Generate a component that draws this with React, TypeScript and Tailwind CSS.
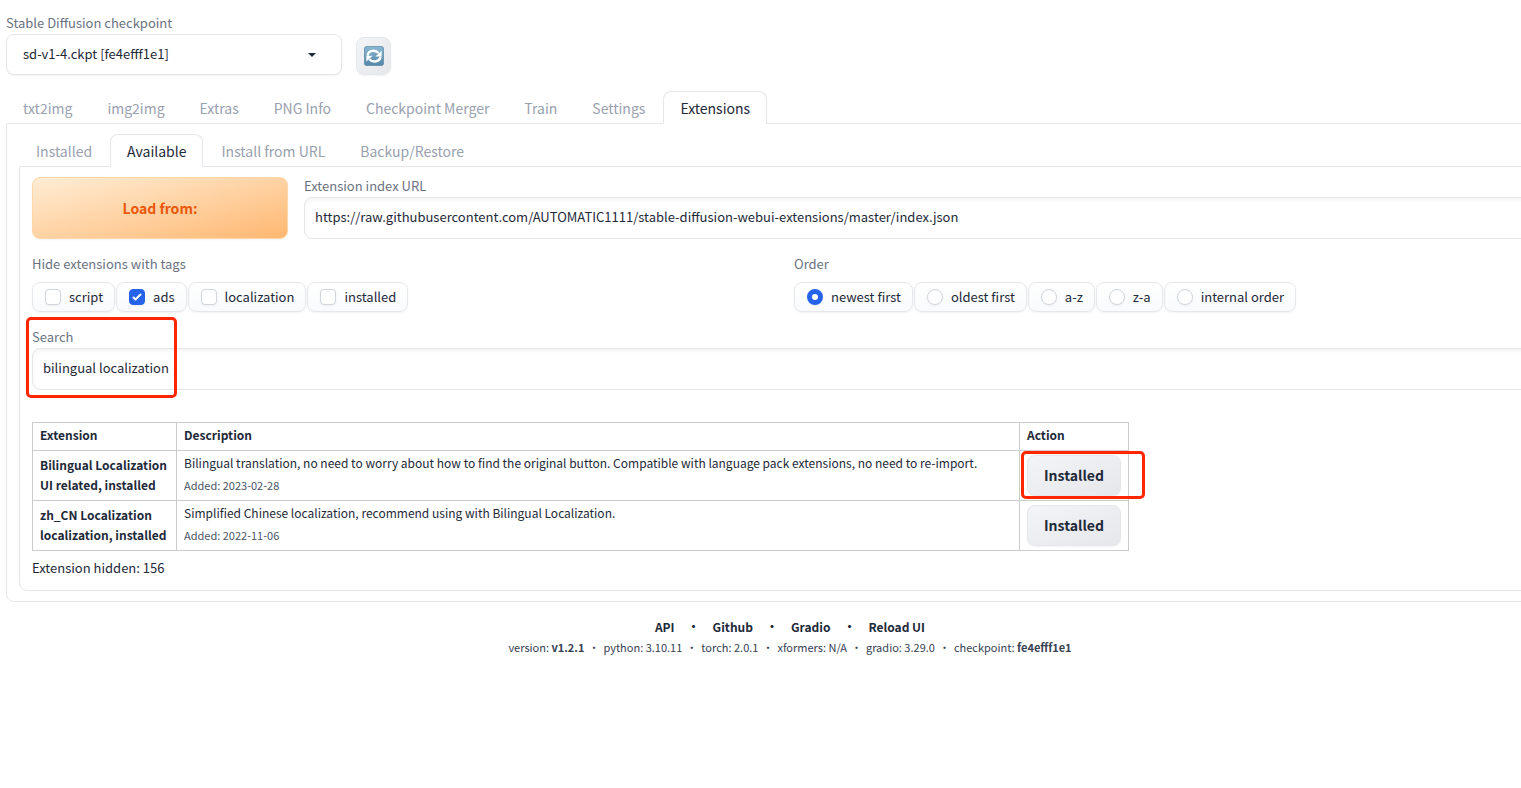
import { useState } from "react";
import clsx from "clsx";

const mainTabs = [
  "txt2img",
  "img2img",
  "Extras",
  "PNG Info",
  "Checkpoint Merger",
  "Train",
  "Settings",
  "Extensions",
];

const extensionTabs = [
  "Installed",
  "Available",
  "Install from URL",
  "Backup/Restore",
];

const tagOptions = ["script", "ads", "localization", "installed"];

const orderOptions = [
  "newest first",
  "oldest first",
  "a-z",
  "z-a",
  "internal order",
];

const extensions = [
  {
    name: "Bilingual Localization",
    tags: "UI related, installed",
    description:
      "Bilingual translation, no need to worry about how to find the original button. Compatible with language pack extensions, no need to re-import.",
    added: "2023-02-28",
    marked: true,
  },
  {
    name: "zh_CN Localization",
    tags: "localization, installed",
    description:
      "Simplified Chinese localization, recommend using with Bilingual Localization.",
    added: "2022-11-06",
    marked: false,
  },
];

const footerLinks = ["API", "Github", "Gradio", "Reload UI"];

const versions = [
  { label: "version", value: "v1.2.1", bold: true },
  { label: "python", value: "3.10.11", bold: false },
  { label: "torch", value: "2.0.1", bold: false },
  { label: "xformers", value: "N/A", bold: false },
  { label: "gradio", value: "3.29.0", bold: false },
  { label: "checkpoint", value: "fe4efff1e1", bold: true },
];

const labelClass = "mb-[2px] block leading-[18px] text-gray-500";

const legendClass = "mb-[9px] leading-[18px] text-gray-500";

const chipClass =
  "flex h-[30px] cursor-pointer items-center gap-2 rounded-lg border border-gray-200 bg-linear-to-t from-gray-50 to-white pr-[11px] pl-3 text-gray-800 shadow-xs";

const inputClass =
  "h-[42px] w-full rounded-lg border border-gray-200 bg-white px-[10px] pb-[3px] text-gray-800 shadow-[inset_0_2px_4px_0_rgb(0,0,0,0.05)] focus:outline-none";

function RefreshIcon() {
  return (
    <svg viewBox="0 0 20 20" className="size-5" aria-hidden="true">
      <defs>
        <linearGradient id="refresh-bg" x1="0" y1="0" x2="0" y2="1">
          <stop offset="0" stopColor="#8ab8d4" />
          <stop offset="1" stopColor="#5686a6" />
        </linearGradient>
      </defs>
      <rect
        x="0.4"
        y="0.4"
        width="19.2"
        height="19.2"
        rx="2.6"
        fill="url(#refresh-bg)"
        stroke="#5d8aa7"
        strokeWidth="0.8"
      />
      <path
        d="M3.6 9.6C4 4.6 11 3 14.6 7"
        fill="none"
        stroke="#fff"
        strokeWidth="2.4"
      />
      <path d="M17.6 4.8v5.6h-6.2z" fill="#fff" />
      <path
        d="M16.4 10.6C16 15.6 9 17.2 5.4 13.2"
        fill="none"
        stroke="#fff"
        strokeWidth="2.4"
      />
      <path d="M2.4 15.4V9.8h6.2z" fill="#fff" />
    </svg>
  );
}

type TabsProps = {
  items: string[];
  active: string;
  onSelect: (item: string) => void;
};

function Tabs({ items, active, onSelect }: TabsProps) {
  return (
    <div role="tablist" className="flex gap-px">
      {items.map((item) => (
        <button
          key={item}
          role="tab"
          aria-selected={item === active}
          onClick={() => onSelect(item)}
          className={clsx(
            "-mb-px h-[33px] cursor-pointer rounded-t-lg border border-b-0 px-4 text-[14px] whitespace-nowrap",
            item === active
              ? "relative border-gray-200 bg-white text-gray-800"
              : "border-transparent text-gray-400"
          )}
        >
          {item}
        </button>
      ))}
    </div>
  );
}

export default function App() {
  const [mainTab, setMainTab] = useState("Extensions");
  const [extensionTab, setExtensionTab] = useState("Available");
  const [hiddenTags, setHiddenTags] = useState(["ads"]);
  const [order, setOrder] = useState("newest first");
  const [indexUrl, setIndexUrl] = useState(
    "https://raw.githubusercontent.com/AUTOMATIC1111/stable-diffusion-webui-extensions/master/index.json"
  );
  const [search, setSearch] = useState("bilingual localization");

  const toggleTag = (tag: string) => {
    setHiddenTags((tags) =>
      tags.includes(tag) ? tags.filter((t) => t !== tag) : [...tags, tag]
    );
  };

  return (
    <div className="overflow-x-hidden bg-white font-['Noto_Sans_CJK_SC',sans-serif] text-[13px] leading-5 text-gray-800">
      <div className="w-[calc(100%+59px)] px-[6px] pt-[14px]">
        {/* Checkpoint */}
        <div className="flex items-end gap-[14px]">
          <div className="w-[336px]">
            <label htmlFor="checkpoint" className={labelClass}>
              Stable Diffusion checkpoint
            </label>
            <div className="relative">
              <select
                id="checkpoint"
                className="block h-[41px] w-full appearance-none rounded-lg border border-gray-200 bg-white px-4 pb-[2px] shadow-xs focus:outline-none"
              >
                <option>sd-v1-4.ckpt [fe4efff1e1]</option>
              </select>
              <svg
                viewBox="0 0 8 4"
                className="pointer-events-none absolute top-[19px] right-[26px] h-1 w-2 fill-gray-800"
              >
                <path d="M0 0h8L4 4z" />
              </svg>
            </div>
          </div>
          <button
            aria-label="Refresh checkpoints"
            className="flex h-[38px] w-[35px] cursor-pointer items-center justify-center rounded-lg border border-gray-200 bg-linear-to-br from-gray-100 to-gray-200 shadow-xs"
          >
            <RefreshIcon />
          </button>
        </div>

        {/* Main tabs */}
        <div className="mt-4">
          <Tabs items={mainTabs} active={mainTab} onSelect={setMainTab} />
        </div>
        <div className="rounded-b-lg border border-gray-200 px-3 py-[10px]">
          <Tabs
            items={extensionTabs}
            active={extensionTab}
            onSelect={setExtensionTab}
          />
          <div className="rounded-b-lg border border-gray-200 px-3 py-[10px]">
            {/* Index URL */}
            <div className="flex gap-4">
              <button className="w-64 shrink-0 cursor-pointer rounded-lg border border-orange-200 bg-linear-to-br from-orange-100 to-[#ffb770] text-[14px] font-bold text-[#ea580c] shadow-xs">
                Load from:
              </button>
              <div className="flex-1">
                <label htmlFor="index-url" className={labelClass}>
                  Extension index URL
                </label>
                <input
                  id="index-url"
                  type="text"
                  value={indexUrl}
                  onChange={(e) => setIndexUrl(e.target.value)}
                  className={inputClass}
                />
              </div>
            </div>

            {/* Filters */}
            <div className="mt-4 grid grid-cols-2 gap-2">
              <fieldset>
                <legend className={legendClass}>
                  Hide extensions with tags
                </legend>
                <div className="flex gap-px">
                  {tagOptions.map((tag) => (
                    <label key={tag} className={chipClass}>
                      <span className="relative flex">
                        <input
                          type="checkbox"
                          checked={hiddenTags.includes(tag)}
                          onChange={() => toggleTag(tag)}
                          className="peer size-4 appearance-none rounded-sm border border-gray-300 bg-white shadow-xs checked:border-[#2563eb] checked:bg-[#2563eb]"
                        />
                        <svg
                          viewBox="0 0 16 16"
                          className="pointer-events-none absolute inset-0 size-4 fill-white opacity-0 peer-checked:opacity-100"
                        >
                          <path d="M12.207 4.793a1 1 0 010 1.414l-5 5a1 1 0 01-1.414 0l-2-2a1 1 0 011.414-1.414L6.5 9.086l4.293-4.293a1 1 0 011.414 0z" />
                        </svg>
                      </span>
                      {tag}
                    </label>
                  ))}
                </div>
              </fieldset>
              <fieldset>
                <legend className={legendClass}>Order</legend>
                <div className="flex gap-px">
                  {orderOptions.map((option) => (
                    <label key={option} className={chipClass}>
                      <input
                        type="radio"
                        name="order"
                        checked={order === option}
                        onChange={() => setOrder(option)}
                        className="size-4 appearance-none rounded-full border border-gray-300 bg-white shadow-xs checked:border-[5px] checked:border-[#2563eb]"
                      />
                      {option}
                    </label>
                  ))}
                </div>
              </fieldset>
            </div>

            {/* Search */}
            <div className="relative mt-4">
              <label htmlFor="search" className={labelClass}>
                Search
              </label>
              <input
                id="search"
                type="text"
                value={search}
                onChange={(e) => setSearch(e.target.value)}
                className={inputClass}
              />
              <div className="pointer-events-none absolute -top-[11px] -left-[6px] h-[81px] w-[151px] rounded-[5px] border-3 border-[#ff2600]" />
            </div>

            {/* Results */}
            <table className="mt-8 border-collapse text-[12px]">
              <colgroup>
                <col className="w-36" />
                <col className="w-[843px]" />
                <col className="w-[109px]" />
              </colgroup>
              <thead>
                <tr className="text-left">
                  {["Extension", "Description", "Action"].map((title) => (
                    <th
                      key={title}
                      className="h-7 border border-[#ccc] px-[7px] pt-[2px] pb-[5px] font-bold"
                    >
                      {title}
                    </th>
                  ))}
                </tr>
              </thead>
              <tbody>
                {extensions.map((ext) => (
                  <tr key={ext.name} className="h-[50px]">
                    <td className="border border-[#ccc] px-[7px] pb-[2px] font-bold whitespace-nowrap">
                      {ext.name}
                      <br />
                      {ext.tags}
                    </td>
                    <td className="border border-[#ccc] px-[7px] pt-[2px] align-top whitespace-nowrap">
                      <p>{ext.description}</p>
                      <p className="pt-[2px] text-[11px] text-gray-600">
                        Added: {ext.added}
                      </p>
                    </td>
                    <td className="relative border border-[#ccc] px-[7px]">
                      <button className="block h-[41px] w-full cursor-pointer rounded-lg border border-gray-200 bg-linear-to-br from-gray-100 to-gray-200 pb-[2px] text-[14px] font-bold shadow-xs">
                        Installed
                      </button>
                      {ext.marked && (
                        <div className="pointer-events-none absolute top-0 left-px h-12 w-[124px] rounded-[5px] border-3 border-[#ff2600]" />
                      )}
                    </td>
                  </tr>
                ))}
              </tbody>
            </table>
            <p className="mt-[7px] mb-[2px]">Extension hidden: 156</p>
          </div>
        </div>

        {/* Footer */}
        <footer className="mt-[15px] text-center">
          <div className="flex justify-center gap-[13px] text-[12px] font-bold">
            {footerLinks.map((link, i) => (
              <span key={link} className="flex gap-[13px]">
                {i > 0 && <span>•</span>}
                <a href="#">{link}</a>
              </span>
            ))}
          </div>
          <div className="flex justify-center gap-1 text-[11px] text-gray-700">
            {versions.map((item, i) => (
              <span key={item.label} className="flex gap-1">
                {i > 0 && <span>•</span>}
                <span>
                  {item.label}:{" "}
                  <span className={clsx(item.bold && "font-bold")}>
                    {item.value}
                  </span>
                </span>
              </span>
            ))}
          </div>
        </footer>
      </div>
    </div>
  );
}
